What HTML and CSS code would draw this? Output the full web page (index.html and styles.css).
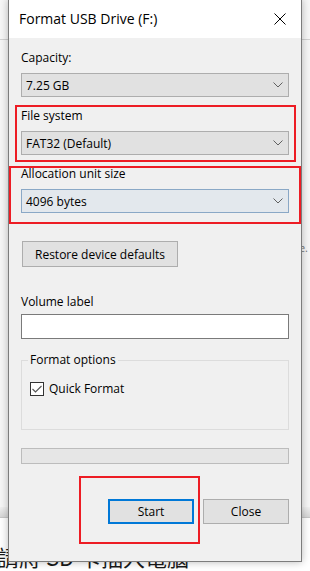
FILE: index.html
```html
<!DOCTYPE html>
<html>
<head>
<meta charset="utf-8">
<link rel="stylesheet" href="styles.css">
</head>
<body>
<div class="page">
  <div class="page-head"></div>
  <div class="page-mid"><span class="page-hint">and the allocation unit size.</span></div>
  <div class="page-band"></div>
  <p class="page-text">請將 SD 卡插入電腦。</p>
</div>

<div class="dialog">
  <div class="titlebar">
    <span class="title">Format USB Drive (F:)</span>
    <svg class="close" width="12" height="12" viewBox="0 0 12 12"><path d="M0.5 0.5 L11.5 11.5 M11.5 0.5 L0.5 11.5" stroke="#000" stroke-width="1" fill="none"/></svg>
  </div>
  <div class="content">
    <span class="lbl lbl-first">Capacity:</span>
    <div class="select"><span>7.25 GB</span><svg class="chev" width="10" height="6" viewBox="0 0 10 6"><path d="M0.5 0.5 L5 5 L9.5 0.5" stroke="#606060" stroke-width="1" fill="none"/></svg></div>
    <span class="lbl">File system</span>
    <div class="select"><span>FAT32 (Default)</span><svg class="chev" width="10" height="6" viewBox="0 0 10 6"><path d="M0.5 0.5 L5 5 L9.5 0.5" stroke="#606060" stroke-width="1" fill="none"/></svg></div>
    <span class="lbl">Allocation unit size</span>
    <div class="select select-hover"><span>4096 bytes</span><svg class="chev" width="10" height="6" viewBox="0 0 10 6"><path d="M0.5 0.5 L5 5 L9.5 0.5" stroke="#606060" stroke-width="1" fill="none"/></svg></div>
    <button class="btn restore">Restore device defaults</button>
    <span class="lbl lbl-vol">Volume label</span>
    <div class="textbox"></div>
    <fieldset class="group">
      <legend>Format options</legend>
      <div class="check"><span class="box"><svg width="12" height="12" viewBox="0 0 12 12"><path d="M1.5 6 L4.5 9 L10.5 3" stroke="#555" stroke-width="1.1" fill="none"/></svg></span><span>Quick Format</span></div>
    </fieldset>
    <div class="progress"></div>
    <div class="actions">
      <button class="btn start">Start</button>
      <button class="btn">Close</button>
    </div>
  </div>
</div>

<div class="mark mark-fs"></div>
<div class="mark mark-alloc"></div>
<div class="mark mark-start"></div>
</body>
</html>
```

FILE: styles.css
```css
* { box-sizing: border-box; }

body {
  margin: 0;
  width: 310px;
  height: 571px;
  overflow: hidden;
  position: relative;
  background: #fff;
  font-family: "Open Sans", "Noto Sans", sans-serif;
  color: #000;
}

.page {
  display: flex;
  flex-direction: column;
  height: 571px;
}

.page-head {
  flex: none;
  height: 40px;
  background: #f7f7f7;
  border-bottom: 1px solid #d2d2d2;
}

.page-mid {
  flex: none;
  height: 467px;
  background: #f6f6f6;
  display: flex;
  justify-content: flex-end;
  align-items: flex-start;
  padding-top: 201px;
}

.page-hint {
  font-size: 11px;
  line-height: 14px;
  color: #777;
  margin-right: 2px;
  white-space: nowrap;
}

.page-band {
  flex: none;
  height: 11px;
  background: linear-gradient(#f0f0f0, #d6d6d6);
  border-bottom: 1px solid #c6c6c6;
}

.page-text {
  margin: 25px 0 0 -3px;
  font-family: "Noto Sans CJK TC", "Noto Sans CJK SC", sans-serif;
  font-size: 22px;
  line-height: 26px;
  color: #1a1a1a;
  white-space: nowrap;
}

.dialog {
  position: absolute;
  left: 8px;
  top: -1px;
  width: 294px;
  height: 563px;
  border: 1px solid #7c7c7c;
  background: #f0f0f0;
  box-shadow: 0 0 8px rgba(0, 0, 0, 0.28);
  display: flex;
  flex-direction: column;
}

.titlebar {
  flex: none;
  height: 38px;
  background: #fff;
  display: flex;
  align-items: center;
  justify-content: space-between;
  padding: 0 15px 0 10px;
}

.title {
  font-size: 14px;
  line-height: 18px;
}

.close { display: block; }

.content {
  flex: 1;
  display: flex;
  flex-direction: column;
  padding: 0 12px;
  font-size: 12px;
}

.lbl {
  display: block;
  font-size: 12px;
  line-height: 14px;
  margin: 12px 0 8px;
}

.lbl-first { margin-top: 13px; }

.select {
  height: 24px;
  border: 1px solid #adadad;
  background: #e1e1e1;
  display: flex;
  align-items: center;
  justify-content: space-between;
  padding: 0 5px 0 4px;
  font-size: 12px;
}

.select-hover {
  border-color: #8aa8c6;
  background: #e3e8ed;
}

.chev { display: block; }

.btn {
  font-family: inherit;
  font-size: 12px;
  color: #000;
  background: #e1e1e1;
  border: 1px solid #adadad;
  padding: 0;
  margin: 0;
}

.restore {
  align-self: flex-start;
  margin: 28px 0 0 1px;
  width: 156px;
  height: 26px;
}

.lbl-vol { margin: 28px 0 5px; }

.textbox {
  height: 25px;
  background: #fff;
  border: 1px solid #7a7a7a;
}

.group {
  margin: 14px 0 0;
  padding: 0 0 33px 6px;
  border: 1px solid #dcdcdc;
  min-width: 0;
}

.group legend {
  padding: 0 2px;
  font-size: 12px;
  line-height: 14px;
}

.check {
  display: flex;
  align-items: center;
  gap: 5px;
  margin: 14px 0 0 2px;
  line-height: 15px;
}

.box {
  width: 14px;
  height: 14px;
  border: 1px solid #333;
  background: #fff;
  display: flex;
  align-items: center;
  justify-content: center;
}

.box svg { display: block; }

.progress {
  margin-top: 18px;
  height: 16px;
  border: 1px solid #bcbcbc;
  background: #e6e6e6;
}

.actions {
  margin-top: 35px;
  display: flex;
  justify-content: flex-end;
  gap: 9px;
}

.actions .btn {
  width: 86px;
  height: 25px;
}

.actions .start {
  border: 2px solid #0078d7;
}

.mark {
  position: absolute;
  border: 2px solid #ed1c24;
}

.mark-fs { left: 15px; top: 105px; width: 281px; height: 57px; }
.mark-alloc { left: 9px; top: 166px; width: 292px; height: 58px; }
.mark-start { left: 79px; top: 476px; width: 121px; height: 68px; }
```
